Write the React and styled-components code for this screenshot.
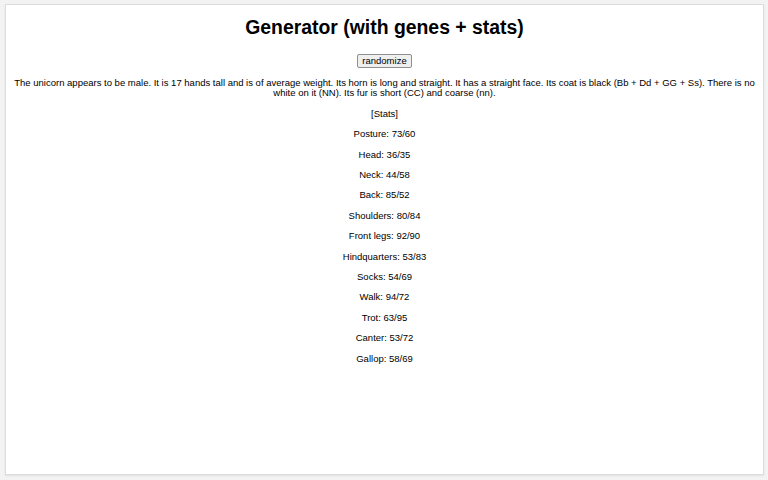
import React from "react";
import styled, { createGlobalStyle } from "styled-components";

const Global = createGlobalStyle`
  html, body { margin: 0; padding: 0; background: #f3f3f3; }
  body { font-family: "Liberation Sans", Arial, sans-serif; color: #000; }
`;

const Page = styled.div`
  padding: 4px 4px 4px 5px;
  box-sizing: border-box;
  height: 480px;
`;

const Card = styled.main`
  background: #fff;
  border: 1px solid #dcdcdc;
  box-shadow: 0 1px 2px rgba(0,0,0,0.08);
  height: 471px;
  box-sizing: border-box;
  padding: 11px 3px;
  text-align: center;
`;

const Title = styled.h1`
  font-size: 19.4px;
  font-weight: bold;
  margin: 0 0 11px;
  line-height: 23px;
`;

const Button = styled.button`
  font-family: "Liberation Sans", Arial, sans-serif;
  font-size: 9.5px;
  padding: 1px 4px;
  background: #efefef;
  border: 1px solid #8f8f8f;
  border-radius: 2px;
  color: #000;
  line-height: 10px;
`;

const Text = styled.p`
  font-size: 9.5px;
  line-height: 10.9px;
  margin: 9.5px 0;
`;

const stats = [
  ["Posture", "73/60"],
  ["Head", "36/35"],
  ["Neck", "44/58"],
  ["Back", "85/52"],
  ["Shoulders", "80/84"],
  ["Front legs", "92/90"],
  ["Hindquarters", "53/83"],
  ["Socks", "54/69"],
  ["Walk", "94/72"],
  ["Trot", "63/95"],
  ["Canter", "53/72"],
  ["Gallop", "58/69"],
];

export default function App() {
  return (
    <>
      <Global />
      <Page>
        <Card>
          <Title>Generator (with genes + stats)</Title>
          <Button>randomize</Button>
          <Text>
            The unicorn appears to be male. It is 17 hands tall and is of average weight. Its horn is long and straight. It has a straight face. Its coat is black (Bb + Dd + GG + Ss). There is no white on it (NN). Its fur is short (CC) and coarse (nn).
          </Text>
          <Text>[Stats]</Text>
          {stats.map(([k, v]) => (
            <Text key={k}>{k}: {v}</Text>
          ))}
        </Card>
      </Page>
    </>
  );
}
